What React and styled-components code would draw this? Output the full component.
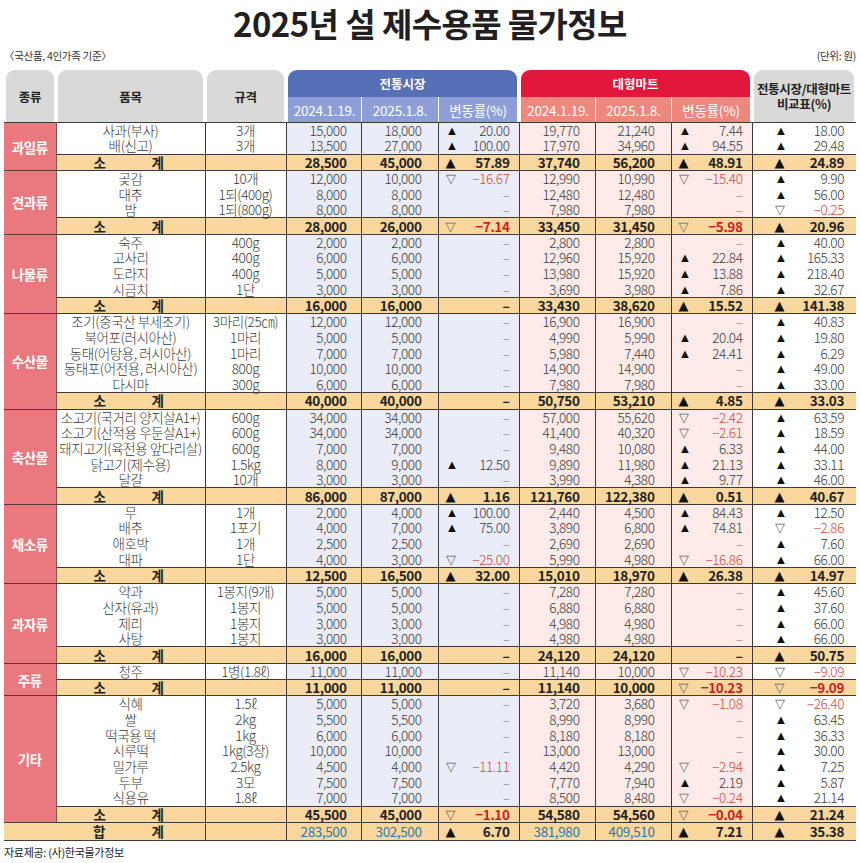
import styled, { createGlobalStyle } from "styled-components";

const GlobalStyle = createGlobalStyle`
  body {
    margin: 0;
    background: #fff;
    font-family: "Noto Sans CJK KR", "Noto Sans", sans-serif;
    color: #333;
  }
`;

const COLS = [52, 149, 81, 75, 77, 81, 76, 76, 81, 104];
const LINE = "#3f3a36";
const TAN = "#fad89d";
const BLUE_BG = "#eaedf8";
const PINK_BG = "#fdeae9";

const SECTIONS = [
  {
    name: "과일류",
    items: [
      ["사과(부사)", "3개", "15,000", "18,000", "20.00", "19,770", "21,240", "7.44", "18.00"],
      ["배(신고)", "3개", "13,500", "27,000", "100.00", "17,970", "34,960", "94.55", "29.48"],
    ],
    sum: ["28,500", "45,000", "57.89", "37,740", "56,200", "48.91", "24.89"],
  },
  {
    name: "견과류",
    items: [
      ["곶감", "10개", "12,000", "10,000", "-16.67", "12,990", "10,990", "-15.40", "9.90"],
      ["대추", "1되(400g)", "8,000", "8,000", "", "12,480", "12,480", "", "56.00"],
      ["밤", "1되(800g)", "8,000", "8,000", "", "7,980", "7,980", "", "-0.25"],
    ],
    sum: ["28,000", "26,000", "-7.14", "33,450", "31,450", "-5.98", "20.96"],
  },
  {
    name: "나물류",
    items: [
      ["숙주", "400g", "2,000", "2,000", "", "2,800", "2,800", "", "40.00"],
      ["고사리", "400g", "6,000", "6,000", "", "12,960", "15,920", "22.84", "165.33"],
      ["도라지", "400g", "5,000", "5,000", "", "13,980", "15,920", "13.88", "218.40"],
      ["시금치", "1단", "3,000", "3,000", "", "3,690", "3,980", "7.86", "32.67"],
    ],
    sum: ["16,000", "16,000", "", "33,430", "38,620", "15.52", "141.38"],
  },
  {
    name: "수산물",
    items: [
      ["조기(중국산 부세조기)", "3마리(25㎝)", "12,000", "12,000", "", "16,900", "16,900", "", "40.83"],
      ["북어포(러시아산)", "1마리", "5,000", "5,000", "", "4,990", "5,990", "20.04", "19.80"],
      ["동태(어탕용, 러시아산)", "1마리", "7,000", "7,000", "", "5,980", "7,440", "24.41", "6.29"],
      ["동태포(어전용, 러시아산)", "800g", "10,000", "10,000", "", "14,900", "14,900", "", "49.00"],
      ["다시마", "300g", "6,000", "6,000", "", "7,980", "7,980", "", "33.00"],
    ],
    sum: ["40,000", "40,000", "", "50,750", "53,210", "4.85", "33.03"],
  },
  {
    name: "축산물",
    items: [
      ["소고기(국거리 양지살A1+)", "600g", "34,000", "34,000", "", "57,000", "55,620", "-2.42", "63.59"],
      ["소고기(산적용 우둔살A1+)", "600g", "34,000", "34,000", "", "41,400", "40,320", "-2.61", "18.59"],
      ["돼지고기(육전용 앞다리살)", "600g", "7,000", "7,000", "", "9,480", "10,080", "6.33", "44.00"],
      ["닭고기(제수용)", "1.5kg", "8,000", "9,000", "12.50", "9,890", "11,980", "21.13", "33.11"],
      ["달걀", "10개", "3,000", "3,000", "", "3,990", "4,380", "9.77", "46.00"],
    ],
    sum: ["86,000", "87,000", "1.16", "121,760", "122,380", "0.51", "40.67"],
  },
  {
    name: "채소류",
    items: [
      ["무", "1개", "2,000", "4,000", "100.00", "2,440", "4,500", "84.43", "12.50"],
      ["배추", "1포기", "4,000", "7,000", "75.00", "3,890", "6,800", "74.81", "-2.86"],
      ["애호박", "1개", "2,500", "2,500", "", "2,690", "2,690", "", "7.60"],
      ["대파", "1단", "4,000", "3,000", "-25.00", "5,990", "4,980", "-16.86", "66.00"],
    ],
    sum: ["12,500", "16,500", "32.00", "15,010", "18,970", "26.38", "14.97"],
  },
  {
    name: "과자류",
    items: [
      ["약과", "1봉지(9개)", "5,000", "5,000", "", "7,280", "7,280", "", "45.60"],
      ["산자(유과)", "1봉지", "5,000", "5,000", "", "6,880", "6,880", "", "37.60"],
      ["제리", "1봉지", "3,000", "3,000", "", "4,980", "4,980", "", "66.00"],
      ["사탕", "1봉지", "3,000", "3,000", "", "4,980", "4,980", "", "66.00"],
    ],
    sum: ["16,000", "16,000", "", "24,120", "24,120", "", "50.75"],
  },
  {
    name: "주류",
    items: [["청주", "1병(1.8ℓ)", "11,000", "11,000", "", "11,140", "10,000", "-10.23", "-9.09"]],
    sum: ["11,000", "11,000", "", "11,140", "10,000", "-10.23", "-9.09"],
  },
  {
    name: "기타",
    items: [
      ["식혜", "1.5ℓ", "5,000", "5,000", "", "3,720", "3,680", "-1.08", "-26.40"],
      ["쌀", "2kg", "5,500", "5,500", "", "8,990", "8,990", "", "63.45"],
      ["떡국용 떡", "1kg", "6,000", "6,000", "", "8,180", "8,180", "", "36.33"],
      ["시루떡", "1kg(3장)", "10,000", "10,000", "", "13,000", "13,000", "", "30.00"],
      ["밀가루", "2.5kg", "4,500", "4,000", "-11.11", "4,420", "4,290", "-2.94", "7.25"],
      ["두부", "3모", "7,500", "7,500", "", "7,770", "7,940", "2.19", "5.87"],
      ["식용유", "1.8ℓ", "7,000", "7,000", "", "8,500", "8,480", "-0.24", "21.14"],
    ],
    sum: ["45,500", "45,000", "-1.10", "54,580", "54,560", "-0.04", "21.24"],
  },
];

const TOTAL = ["283,500", "302,500", "6.70", "381,980", "409,510", "7.21", "35.38"];

const Page = styled.div`
  width: 860px;
  padding: 0 4px;
  box-sizing: border-box;
`;

const Title = styled.h1`
  margin: 0;
  text-align: center;
  font-size: 33px;
  font-weight: 700;
  line-height: 46px;
  color: #231f20;
  letter-spacing: -0.6px;
`;

const Notes = styled.div`
  display: flex;
  justify-content: space-between;
  margin-top: 2px;
  font-size: 10.5px;
  line-height: 16px;
  color: #333;
  letter-spacing: -0.3px;
`;

const HeaderGrid = styled.div`
  display: grid;
  grid-template-columns: ${COLS.map((c) => c + "px").join(" ")};
  grid-template-rows: 27px 25px;
  margin-top: 6px;
`;

const HeadBox = styled.div`
  grid-row: span 2;
  margin: 0 2px;
  background: #d9d9d9;
  border-radius: 9px 9px 0 0;
  display: flex;
  align-items: center;
  justify-content: center;
  text-align: center;
  font-size: 12.5px;
  font-weight: 700;
  line-height: 15px;
  color: #222;
  letter-spacing: -0.3px;
`;

const GroupTitle = styled.div`
  grid-column: span 3;
  margin: 0 2px;
  background: ${(p) => p.$color};
  border-radius: 9px 9px 0 0;
  display: flex;
  align-items: center;
  justify-content: center;
  color: #fff;
  font-size: 12.5px;
  font-weight: 700;
`;

const DateCell = styled.div`
  margin-left: ${(p) => (p.$first ? "2px" : "0")};
  margin-right: ${(p) => (p.$last ? "2px" : "0")};
  border-left: ${(p) => (p.$first ? "none" : "1.5px solid #fff")};
  background: ${(p) => p.$color};
  display: flex;
  align-items: center;
  justify-content: center;
  color: #fff;
  font-size: 13.5px;
  letter-spacing: -0.2px;
`;

const Table = styled.table`
  width: 852px;
  table-layout: fixed;
  border-collapse: collapse;
  border-top: 1.5px solid ${LINE};
  font-size: 13.5px;
  letter-spacing: -0.4px;
`;

const ItemRow = styled.tr`
  height: 15.75px;
`;

const SumRow = styled.tr`
  height: ${(p) => (p.$total ? 17.5 : 16.5)}px;
  & > td {
    background: ${TAN};
    border-top: 1.5px solid ${LINE};
    border-bottom: 1.5px solid ${LINE};
    font-weight: 700;
    color: #222;
  }
`;

const Cell = styled.td`
  padding: 0 ${(p) => p.$pr || 0}px 0 0;
  line-height: 15px;
  border-left: 1px solid ${LINE};
  background: ${(p) => p.$bg || "#fff"};
  text-align: ${(p) => p.$align || "center"};
  font-weight: 300;
  color: #3a3a3a;
  white-space: nowrap;
`;

const Category = styled.td`
  background: #e9797e;
  color: #fff;
  font-size: 13.5px;
  font-weight: 700;
  text-align: center;
  border-right: 1px solid #8a5050;
  border-bottom: 1.5px solid #5a3934;
  padding: 0;
`;

const Spread = styled.div`
  display: flex;
  justify-content: space-between;
  padding: 0 ${(p) => p.$right}px 0 ${(p) => p.$left}px;
`;

const ChangeBox = styled.div`
  display: flex;
  align-items: center;
  justify-content: space-between;
  padding: 0 ${(p) => (p.$wide ? 12 : 9)}px 0 ${(p) => (p.$wide ? 22 : 7)}px;
`;

const Arrow = styled.span`
  font-family: "DejaVu Sans", sans-serif;
  font-size: 13px;
  line-height: 1;
  color: ${(p) => (p.$down ? "#666" : "#111")};
`;

const Value = styled.span`
  color: ${(p) => (p.$neg ? (p.$bold ? "#c9211e" : "#d5483d") : p.$bold ? "#222" : "#3a3a3a")};
  font-weight: ${(p) => (p.$bold ? 700 : 300)};
`;

const Dash = styled.span`
  color: ${(p) => (p.$bold ? "#222" : "#888")};
  font-weight: ${(p) => (p.$bold ? 700 : 300)};
`;

const Blue = styled.span`
  color: #2b78b0;
  font-weight: 400;
`;

const Footer = styled.div`
  margin-top: 3px;
  font-size: 11px;
  line-height: 16px;
  color: #222;
  letter-spacing: -0.3px;
`;

const Change = ({ v, bold, wide }) => {
  if (!v)
    return (
      <ChangeBox $wide={wide}>
        <span />
        <Dash $bold={bold}>–</Dash>
      </ChangeBox>
    );
  const neg = v.startsWith("-");
  return (
    <ChangeBox $wide={wide}>
      <Arrow $down={neg}>{neg ? "▽" : "▲"}</Arrow>
      <Value $neg={neg} $bold={bold}>
        {neg ? "−" + v.slice(1) : v}
      </Value>
    </ChangeBox>
  );
};

const Figures = ({ vals, bold, blue }) => {
  const [a, b, c, d, e, f, g] = vals;
  const price = (x) => (blue ? <Blue>{x}</Blue> : x);
  return (
    <>
      <Cell $align="right" $pr={14} $bg={BLUE_BG}>{price(a)}</Cell>
      <Cell $align="right" $pr={16} $bg={BLUE_BG}>{price(b)}</Cell>
      <Cell $bg={BLUE_BG}><Change v={c} bold={bold} /></Cell>
      <Cell $align="right" $pr={15} $bg={PINK_BG}>{price(d)}</Cell>
      <Cell $align="right" $pr={16} $bg={PINK_BG}>{price(e)}</Cell>
      <Cell $bg={PINK_BG}><Change v={f} bold={bold} /></Cell>
      <Cell><Change v={g} bold={bold} wide /></Cell>
    </>
  );
};

const Section = ({ s }) => (
  <>
    {s.items.map((it, i) => (
      <ItemRow key={it[0]}>
        {i === 0 && <Category rowSpan={s.items.length + 1}>{s.name}</Category>}
        <Cell>{it[0]}</Cell>
        <Cell>{it[1]}</Cell>
        <Figures vals={it.slice(2)} />
      </ItemRow>
    ))}
    <SumRow>
      <Cell>
        <Spread $left={37} $right={41}>
          <span>소</span>
          <span>계</span>
        </Spread>
      </Cell>
      <Cell />
      <Figures vals={s.sum} bold />
    </SumRow>
  </>
);

export default function App() {
  return (
    <Page>
      <GlobalStyle />
      <Title>2025년 설 제수용품 물가정보</Title>
      <Notes>
        <span>〈국산품, 4인가족 기준〉</span>
        <span>(단위: 원)</span>
      </Notes>
      <HeaderGrid>
        <HeadBox>종류</HeadBox>
        <HeadBox>품목</HeadBox>
        <HeadBox>규격</HeadBox>
        <GroupTitle $color="#5670b7">전통시장</GroupTitle>
        <GroupTitle $color="#e2173c">대형마트</GroupTitle>
        <HeadBox>
          전통시장/대형마트
          <br />
          비교표(%)
        </HeadBox>
        <DateCell $first $color="#8e9fd7">2024.1.19.</DateCell>
        <DateCell $color="#8e9fd7">2025.1.8.</DateCell>
        <DateCell $last $color="#8e9fd7">변동률(%)</DateCell>
        <DateCell $first $color="#f0877f">2024.1.19.</DateCell>
        <DateCell $color="#f0877f">2025.1.8.</DateCell>
        <DateCell $last $color="#f0877f">변동률(%)</DateCell>
      </HeaderGrid>
      <Table>
        <colgroup>
          {COLS.map((w, i) => (
            <col key={i} style={{ width: w }} />
          ))}
        </colgroup>
        <tbody>
          {SECTIONS.map((s) => (
            <Section key={s.name} s={s} />
          ))}
          <SumRow $total>
            <Cell colSpan={2} style={{ borderLeft: "none" }}>
              <Spread $left={89} $right={41}>
                <span>합</span>
                <span>계</span>
              </Spread>
            </Cell>
            <Cell />
            <Figures vals={TOTAL} bold blue />
          </SumRow>
        </tbody>
      </Table>
      <Footer>자료제공: (사)한국물가정보</Footer>
    </Page>
  );
}
